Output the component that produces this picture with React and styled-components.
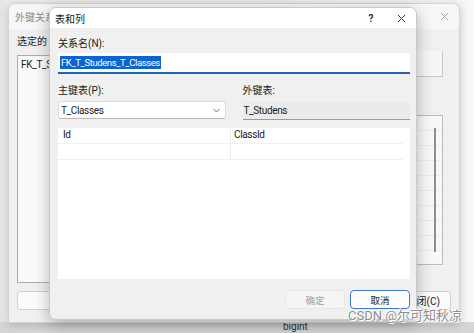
import React from 'react';
import styled, { createGlobalStyle } from 'styled-components';

const Global = createGlobalStyle`
  html, body { margin: 0; padding: 0; }
  body {
    width: 474px;
    height: 333px;
    overflow: hidden;
    font-family: Roboto, "Noto Sans CJK SC", sans-serif;
    font-size: 10px;
    color: #1b1b1b;
  }
`;

const Desktop = styled.div`
  position: relative;
  width: 474px;
  height: 333px;
  overflow: hidden;
  display: flex;
  flex-direction: column;
  background: linear-gradient(90deg, #e4e4e4 0, #ececec 8px, #f4f4f4 460px, #fafafa 474px);
`;

const Spacer = styled.div`
  flex: 1;
`;

const BottomStrip = styled.div`
  height: 11px;
  background: #d6d6d6;
  padding-left: 283px;
  font-size: 10px;
  line-height: 10px;
  color: #333;
`;

/* ---------- back window ---------- */

const BackWindow = styled.div`
  position: absolute;
  left: 8px;
  top: 3px;
  width: 452px;
  height: 320px;
  background: #f0f0f0;
  border: 1px solid #d4d4d4;
  border-radius: 7px 7px 0 0;
  box-shadow: 0 2px 10px rgba(0, 0, 0, 0.18);
  display: flex;
  flex-direction: column;
  box-sizing: border-box;
`;

const BackTitle = styled.div`
  height: 25px;
  display: flex;
  align-items: center;
  justify-content: space-between;
  padding: 0 10px 0 6px;
  background: #f7f7f7;
  border-radius: 7px 7px 0 0;
  color: #8a8a8a;
  font-size: 10px;
`;

const BackBody = styled.div`
  flex: 1;
  display: flex;
  flex-direction: column;
  padding: 4px 8px 12px 8px;
`;

const BackMain = styled.div`
  flex: 1;
  display: flex;
  gap: 10px;
`;

/* only the strip left of the front dialog is visible */
const BackLeft = styled.div`
  width: 32px;
  display: flex;
  flex-direction: column;
  overflow: hidden;
  white-space: nowrap;
`;

const BackLabel = styled.div`
  height: 18px;
  line-height: 18px;
  color: #222;
`;

const ListBox = styled.div`
  flex: 1;
  margin-top: 4px;
  background: #fafafa;
  border: 1px solid #adadad;
  border-right: none;
  padding: 3px 3px;
  letter-spacing: -0.3px;
`;

const BackRight = styled.div`
  flex: 1;
  display: flex;
  flex-direction: column;
  padding-top: 18px;
  gap: 38px;
  padding-right: 8px;
`;

const InfoBox = styled.div`
  height: 25px;
  background: #f6f6f6;
  border-bottom: 1px solid #c8c8c8;
  border-right: 1px solid #c8c8c8;
`;

const PropGrid = styled.div`
  height: 136px;
  border: 1px solid #bdbdbd;
  background: repeating-linear-gradient(180deg, #f8f8f8 0, #f8f8f8 14px, #ececf1 14px, #ececf1 15px);
  display: flex;
  justify-content: flex-end;
  padding: 12px 6px 0 0;
`;

const ScrollLine = styled.div`
  width: 2px;
  height: 124px;
  background: #8e8e8e;
`;

const BackFooter = styled.div`
  display: flex;
  justify-content: space-between;
  margin-top: 8px;
`;

const BackButton = styled.div`
  width: 130px;
  height: 19px;
  background: #fbfbfb;
  border: 1px solid #d0d0d0;
  border-radius: 3px;
  display: flex;
  align-items: center;
  justify-content: ${(p) => (p.$end ? 'flex-end' : 'center')};
  padding-right: ${(p) => (p.$end ? '10px' : '0')};
  color: #222;
  box-sizing: border-box;
`;

/* ---------- front dialog ---------- */

const Dialog = styled.div`
  position: absolute;
  left: 49px;
  top: 7px;
  width: 368px;
  height: 313px;
  background: #f0f0f0;
  border: 1px solid #c9c9c9;
  border-radius: 7px;
  box-shadow: 0 4px 16px rgba(0, 0, 0, 0.28);
  box-sizing: border-box;
  display: flex;
  flex-direction: column;
  overflow: hidden;
`;

const TitleBar = styled.div`
  height: 20px;
  background: #ffffff;
  display: flex;
  align-items: center;
  padding-left: 5px;
  color: #1a1a1a;
`;

const TitleText = styled.span`
  flex: 1;
`;

const TitleButton = styled.div`
  width: 30px;
  height: 20px;
  display: flex;
  align-items: center;
  justify-content: center;
  font-size: 10px;
  font-weight: 600;
  color: #222;
`;

const DialogBody = styled.div`
  flex: 1;
  display: flex;
  flex-direction: column;
  padding: 9px 6px 0 8px;
`;

const Label = styled.div`
  height: 14px;
  line-height: 14px;
  color: #1a1a1a;
  margin-bottom: ${(p) => p.$mb}px;
`;

const TextInput = styled.div`
  height: 21px;
  background: #ffffff;
  border-bottom: 2px solid #1f64b4;
  border-radius: 3px 3px 0 0;
  display: flex;
  align-items: center;
  padding-left: 2px;
  box-sizing: border-box;
`;

const Selected = styled.span`
  background: #0a64d2;
  color: #ffffff;
  font-size: 9.5px;
  letter-spacing: -0.4px;
  line-height: 13px;
  padding: 0 1px;
`;

const TwoCols = styled.div`
  display: flex;
  gap: 17px;
  margin-top: 10px;
`;

const Col = styled.div`
  flex: 1;
  display: flex;
  flex-direction: column;
`;

const SelectBox = styled.div`
  height: 18px;
  background: #ffffff;
  border: 1px solid #dcdcdc;
  border-bottom-color: #b8b8b8;
  border-radius: 3px;
  display: flex;
  align-items: center;
  justify-content: space-between;
  padding: 0 5px 0 2px;
  letter-spacing: -0.35px;
  box-sizing: border-box;
`;

const ReadBox = styled.div`
  height: 17px;
  margin-top: 1px;
  background: #ebebeb;
  border-bottom: 1px solid #9a9a9a;
  display: flex;
  align-items: center;
  padding-left: 1px;
  letter-spacing: -0.35px;
`;

const Grid = styled.div`
  height: 151px;
  margin-top: 8px;
  background: #ffffff;
  padding-right: 7px;
`;

const GridRow = styled.div`
  display: grid;
  grid-template-columns: 173px 1fr;
  height: 15px;
  border-bottom: 1px solid #f0f0f0;
`;

const Cell = styled.div`
  padding-left: ${(p) => (p.$first ? 5 : 3)}px;
  line-height: 13px;
  letter-spacing: -0.35px;
  border-right: 1px solid ${(p) => (p.$first ? '#ececec' : 'transparent')};
`;

const Footer = styled.div`
  display: flex;
  justify-content: flex-end;
  gap: 5px;
  margin-top: 11px;
`;

const Button = styled.div`
  width: 60px;
  height: 19px;
  border-radius: 4px;
  box-sizing: border-box;
  display: flex;
  align-items: center;
  justify-content: center;
  font-size: 9.5px;
  background: ${(p) => (p.$primary ? '#fdfdfd' : '#f5f5f5')};
  color: ${(p) => (p.$primary ? '#1a1a1a' : '#a0a0a0')};
  border: 1px solid ${(p) => (p.$primary ? '#3a7bd0' : '#e6e6e6')};
`;

const Watermark = styled.div`
  position: absolute;
  right: 12px;
  top: 307px;
  font-size: 13px;
  line-height: 18px;
  color: #8c8c8c;
  text-shadow: 0 0 1px #fff, 1px 1px 0 #fff, -1px -1px 0 #fff;
  white-space: nowrap;
`;

const CloseIcon = ({ color = '#222', size = 9 }) => (
  <svg width={size} height={size} viewBox="0 0 10 10">
    <path d="M1 1 L9 9 M9 1 L1 9" stroke={color} strokeWidth="1" fill="none" />
  </svg>
);

const Chevron = () => (
  <svg width="7" height="5" viewBox="0 0 7 5">
    <path d="M0.5 1 L3.5 4 L6.5 1" stroke="#666" strokeWidth="0.9" fill="none" />
  </svg>
);

export default function App() {
  return (
    <>
      <Global />
      <Desktop>
        <Spacer />
        <BottomStrip>bigint</BottomStrip>

        <BackWindow>
          <BackTitle>
            <span>外键关系</span>
            <CloseIcon color="#9a9a9a" size={9} />
          </BackTitle>
          <BackBody>
            <BackMain>
              <BackLeft>
                <BackLabel>选定的 关系(S):</BackLabel>
                <ListBox>FK_T_Studens_T_Classes</ListBox>
              </BackLeft>
              <BackRight>
                <InfoBox />
                <PropGrid>
                  <ScrollLine />
                </PropGrid>
              </BackRight>
            </BackMain>
            <BackFooter>
              <BackButton>添加(A)</BackButton>
              <BackButton $end>关闭(C)</BackButton>
            </BackFooter>
          </BackBody>
        </BackWindow>

        <Dialog>
          <TitleBar>
            <TitleText>表和列</TitleText>
            <TitleButton>?</TitleButton>
            <TitleButton>
              <CloseIcon />
            </TitleButton>
          </TitleBar>
          <DialogBody>
            <Label $mb={2}>关系名(N):</Label>
            <TextInput>
              <Selected>FK_T_Studens_T_Classes</Selected>
            </TextInput>
            <TwoCols>
              <Col>
                <Label $mb={3}>主键表(P):</Label>
                <SelectBox>
                  <span>T_Classes</span>
                  <Chevron />
                </SelectBox>
              </Col>
              <Col>
                <Label $mb={3}>外键表:</Label>
                <ReadBox>T_Studens</ReadBox>
              </Col>
            </TwoCols>
            <Grid>
              <GridRow>
                <Cell $first>Id</Cell>
                <Cell>ClassId</Cell>
              </GridRow>
              <GridRow>
                <Cell $first />
                <Cell />
              </GridRow>
            </Grid>
            <Footer>
              <Button>确定</Button>
              <Button $primary>取消</Button>
            </Footer>
          </DialogBody>
        </Dialog>

        <Watermark>CSDN @尔可知秋凉</Watermark>
      </Desktop>
    </>
  );
}
